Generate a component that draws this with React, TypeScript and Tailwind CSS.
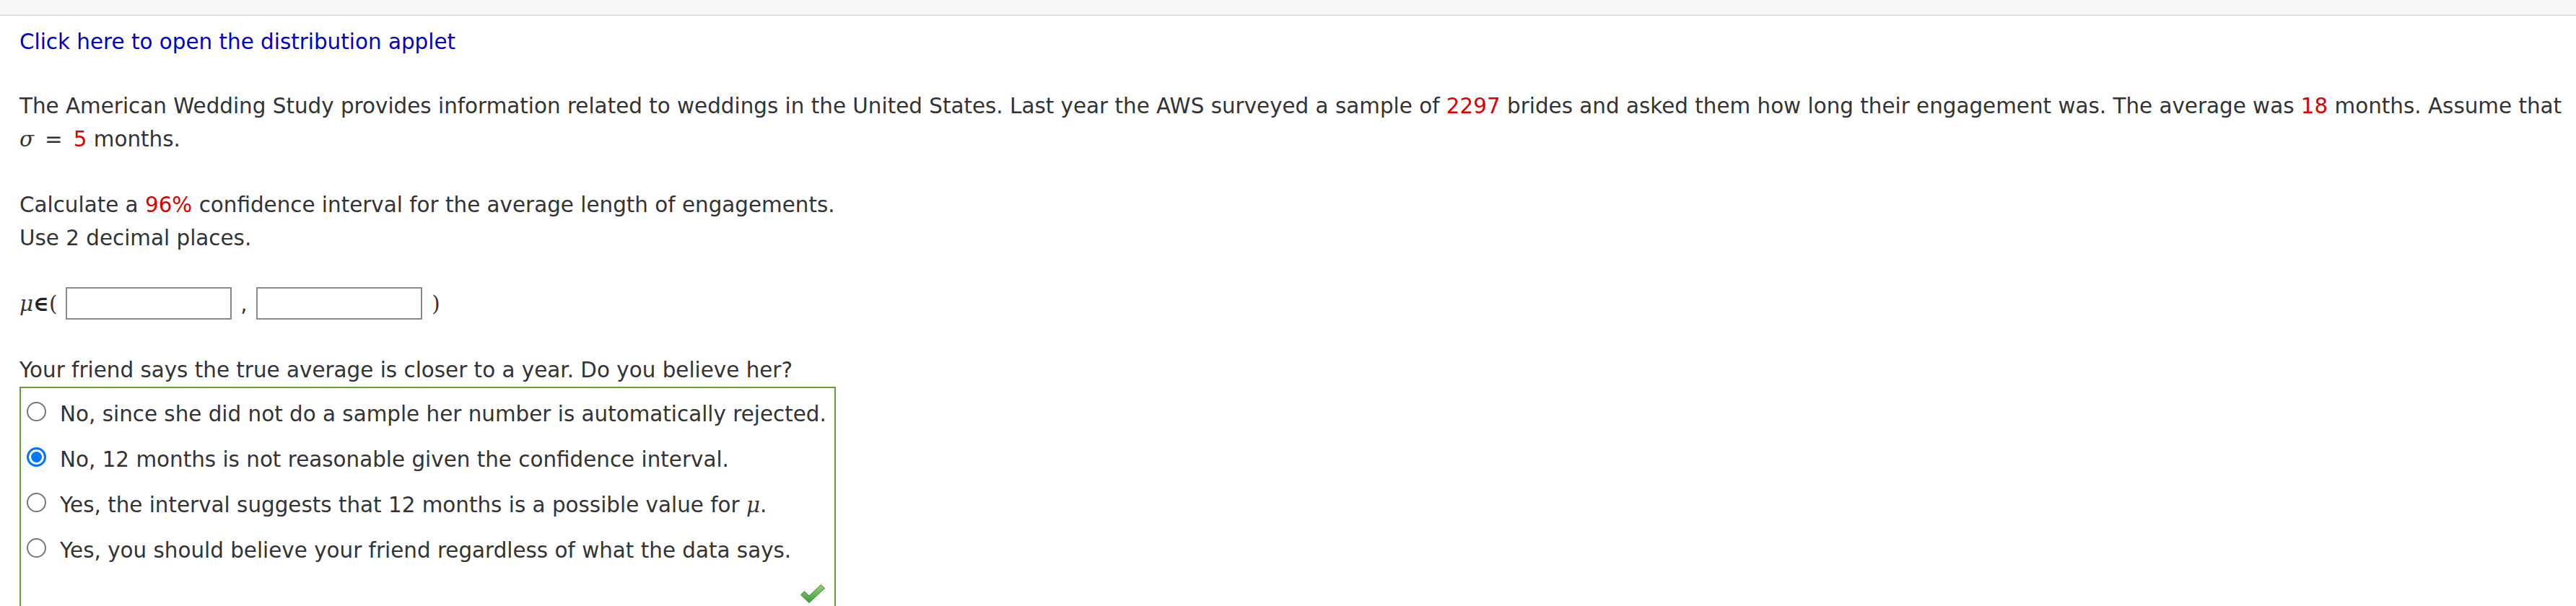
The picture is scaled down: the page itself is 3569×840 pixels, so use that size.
import type { ReactNode } from "react";

const options = [
  { id: 1, label: "No, since she did not do a sample her number is automatically rejected.", checked: false },
  { id: 2, label: "No, 12 months is not reasonable given the confidence interval.", checked: true },
  { id: 3, label: "Yes, the interval suggests that 12 months is a possible value for", mu: true, checked: false },
  { id: 4, label: "Yes, you should believe your friend regardless of what the data says.", checked: false },
];

function Red({ children }: { children: ReactNode }) {
  return <span className="text-[#dd0000]">{children}</span>;
}

function MathVar({ children }: { children: ReactNode }) {
  return <span className="font-['DejaVu_Serif',serif] italic">{children}</span>;
}

function Radio({ checked }: { checked: boolean }) {
  if (checked) {
    return (
      <span className="mb-[7px] flex h-[27px] w-[27px] shrink-0 items-center justify-center rounded-full border-[3px] border-[#0075ff] bg-white">
        <span className="h-[15px] w-[15px] rounded-full bg-[#0075ff]" />
      </span>
    );
  }
  return <span className="mb-[7px] block h-[27px] w-[27px] shrink-0 rounded-full border-[2px] border-[#767676] bg-white" />;
}

function CheckMark() {
  return (
    <svg width="36" height="28" viewBox="0 0 36 28">
      <defs>
        <linearGradient id="ck" x1="0" y1="0" x2="0" y2="1">
          <stop offset="0" stopColor="#8fd46c" />
          <stop offset="1" stopColor="#3f9c3c" />
        </linearGradient>
      </defs>
      <path d="M1.5 15.5 L6.5 10.5 L13 17 L29.5 1.5 L34.5 6.5 L13 26.5 Z" fill="url(#ck)" stroke="#3a8a38" strokeWidth="1" strokeLinejoin="round" />
    </svg>
  );
}

export default function App() {
  return (
    <div className="min-h-[900px] bg-white font-['DejaVu_Sans','Verdana',sans-serif] text-[29.4px] leading-[46px] text-[#333]">
      <div className="h-[22px] border-b-2 border-[#e0e0e0] bg-[#f6f6f6]" />

      <div className="px-[27px] pt-[13px]">
        <a href="#" className="text-[#0000cc]">
          Click here to open the distribution applet
        </a>

        <p className="mt-[43px] whitespace-nowrap">
          The American Wedding Study provides information related to weddings in the United States. Last year the AWS
          surveyed a sample of <Red>2297</Red> brides and asked them how long their engagement was. The average was{" "}
          <Red>18</Red> months. Assume that
          <br />
          <MathVar>σ</MathVar>
          <span className="mx-[15px]">=</span>
          <Red>5</Red> months.
        </p>

        <p className="mt-[45px]">
          Calculate a <Red>96%</Red> confidence interval for the average length of engagements.
          <br />
          Use 2 decimal places.
        </p>

        <div className="mt-[45px] flex h-[45px] items-center">
          <span className="font-['DejaVu_Serif',serif]">
            <span className="italic">μ</span>
            <span className="font-bold text-[#222]">∈</span>(
          </span>
          <input type="text" className="ml-[12px] h-[45px] w-[230px] border-2 border-[#8a8a8a] bg-white px-2 outline-none" />
          <span className="mx-[12px] w-[10px]">,</span>
          <input type="text" className="h-[45px] w-[230px] border-2 border-[#8a8a8a] bg-white px-2 outline-none" />
          <span className="ml-[13px] font-['DejaVu_Serif',serif]">)</span>
        </div>

        <p className="mt-[47px]">Your friend says the true average is closer to a year. Do you believe her?</p>

        <div className="w-[1131px] border-2 border-[#5fa136] pt-[4px] pb-[40px]">
          {options.map((opt) => (
            <label key={opt.id} className="flex h-[63px] items-center pl-[8px]">
              <Radio checked={opt.checked} />
              <span className="ml-[19px] whitespace-nowrap">
                {opt.label}
                {opt.mu && (
                  <>
                    {" "}
                    <MathVar>μ</MathVar>.
                  </>
                )}
              </span>
            </label>
          ))}
          <div className="flex justify-end pt-[15px] pr-[12px]">
            <CheckMark />
          </div>
        </div>
      </div>
    </div>
  );
}
